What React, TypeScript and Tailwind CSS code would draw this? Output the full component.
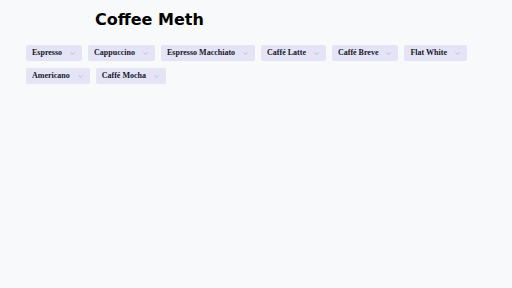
import { ChevronDown } from 'lucide-react'

const drinks = [
  'Espresso',
  'Cappuccino',
  'Espresso Macchiato',
  'Caffé Latte',
  'Caffé Breve',
  'Flat White',
  'Americano',
  'Caffé Mocha',
]

export default function App() {
  return (
    <div className="min-h-screen bg-[#f8f9fb] px-[26px] pt-[9px]">
      <h1 className="pl-[69px] text-[16px] font-bold leading-[22px] text-black font-['DejaVu_Sans',sans-serif]">
        Coffee Meth
      </h1>

      {/* drink menus */}
      <div className="mt-[14px] flex flex-wrap gap-x-[6px] gap-y-[7px]">
        {drinks.map((name) => (
          <button
            key={name}
            className="flex h-4 items-center gap-[7px] rounded-[2px] bg-[#e4e4f6] pl-[6px] pr-[6px] font-['Liberation_Serif',serif] text-[8px] font-bold text-[#16162a]"
          >
            {name}
            <ChevronDown className="h-[7px] w-[7px] text-[#a0a0b8]" strokeWidth={2} />
          </button>
        ))}
      </div>
    </div>
  )
}
